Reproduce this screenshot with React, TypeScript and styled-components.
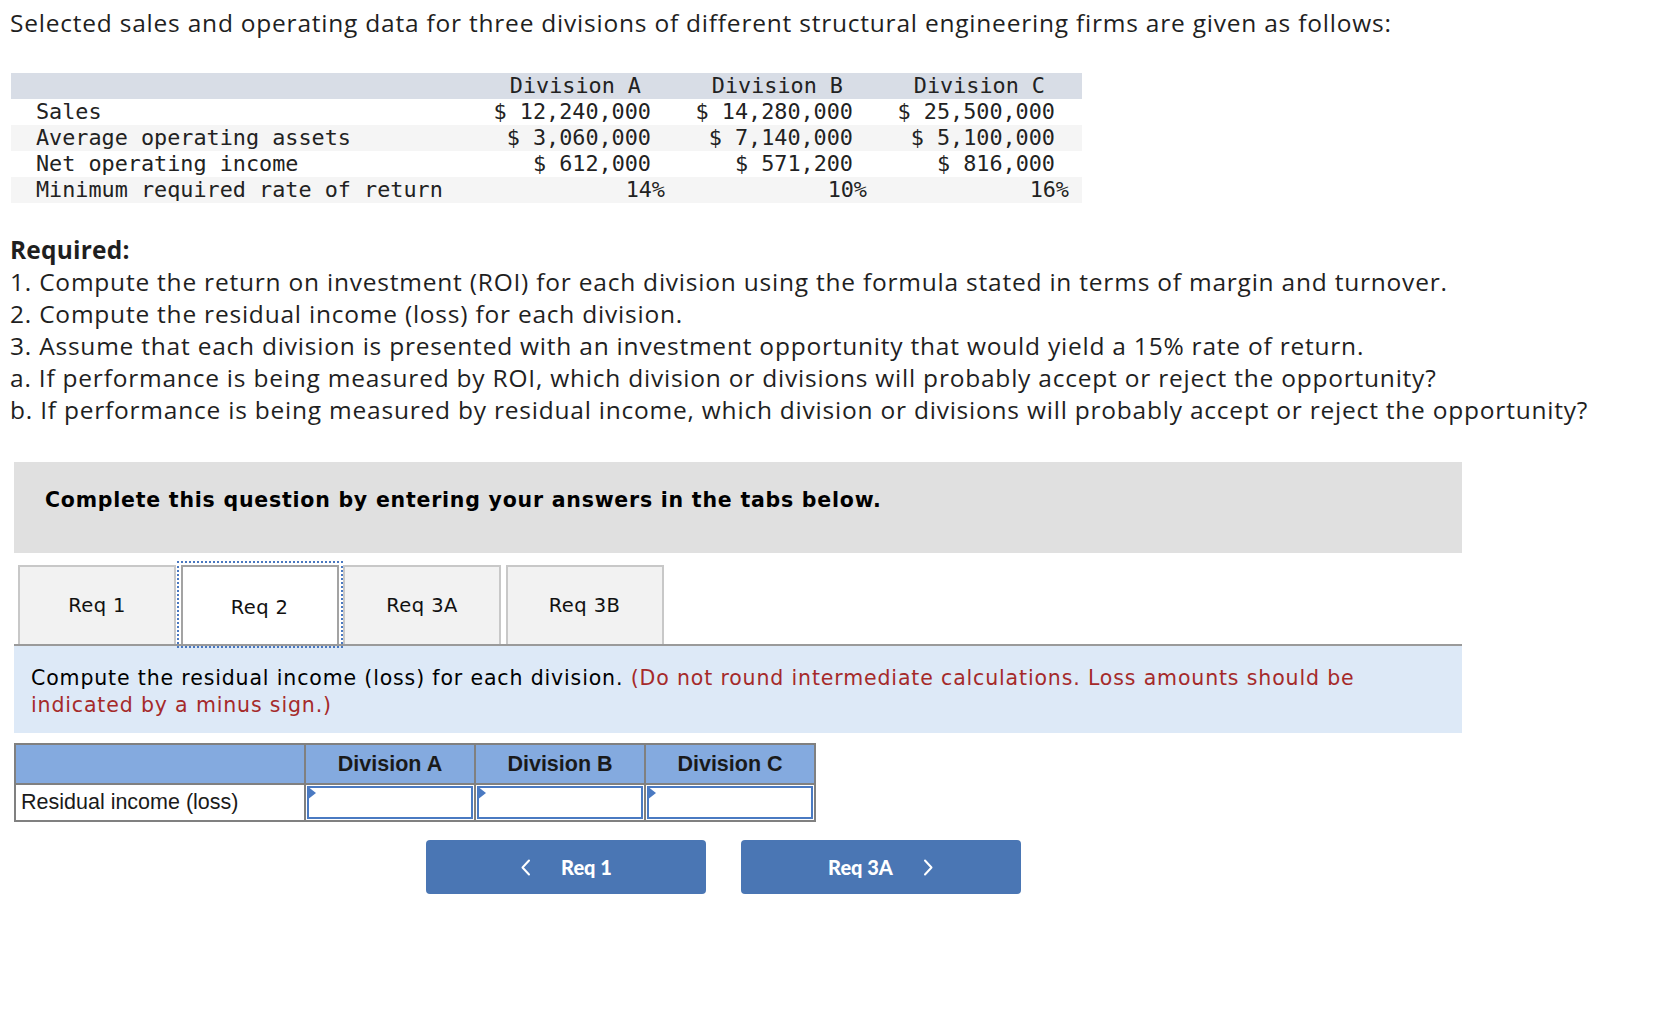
import React from 'react';
import styled, { createGlobalStyle } from 'styled-components';

const GlobalStyle = createGlobalStyle`
  html, body { margin: 0; padding: 0; background: #fff; }
  body { font-family: "Open Sans", "Liberation Sans", sans-serif; color: #1f1f1f; }
`;

const Page = styled.div`
  padding: 7px 0 40px 10px;
`;

const Intro = styled.p`
  margin: 0;
  font-family: "Open Sans", "Liberation Sans", sans-serif;
  font-size: 24.5px;
  letter-spacing: 0.78px;
  line-height: 32px;
  color: #1f1f1f;
`;

const DataTable = styled.div`
  margin: 34px 0 0 1px;
  width: 1071px;
  font-family: "DejaVu Sans Mono", "Liberation Mono", monospace;
  font-size: 21.8px;
  color: #222;
`;

type Tone = 'head' | 'white' | 'gray';

const DataRow = styled.div<{ $tone: Tone }>`
  display: grid;
  grid-template-columns: 1fr 202px 202px 202px;
  padding-right: 13px;
  height: 26px;
  line-height: 26px;
  background: ${(p) => (p.$tone === 'head' ? '#d8dde6' : p.$tone === 'gray' ? '#f5f5f5' : '#ffffff')};
`;

const DataLabel = styled.span`
  padding-left: 25px;
  white-space: pre;
`;

const DataCell = styled.span<{ $pad: number }>`
  text-align: right;
  padding-right: ${(p) => p.$pad}px;
  white-space: pre;
`;

const Required = styled.div`
  margin-top: 31px;
  font-family: "Open Sans", "Liberation Sans", sans-serif;
  font-size: 24.5px;
  letter-spacing: 0.78px;
  line-height: 32px;
  color: #1f1f1f;
`;

const ReqTitle = styled.div`
  font-weight: 700;
  letter-spacing: 0.2px;
`;

const ReqLine = styled.div``;

const Question = styled.div`
  margin: 36px 0 0 4px;
  width: 1448px;
`;

const Banner = styled.div`
  box-sizing: border-box;
  height: 91px;
  padding: 26px 0 0 31px;
  background: #e0e0e0;
  font-family: "DejaVu Sans", Verdana, sans-serif;
  font-weight: 700;
  font-size: 20.5px;
  letter-spacing: 0.77px;
  line-height: 24px;
  color: #000;
`;

const TabBar = styled.div`
  margin-top: 12px;
  display: flex;
  gap: 4.5px;
  padding-left: 4px;
  border-bottom: 2px solid #9a9a9a;
`;

const Tab = styled.div<{ $active?: boolean }>`
  box-sizing: border-box;
  width: 158px;
  height: 79px;
  display: flex;
  align-items: center;
  justify-content: center;
  background: ${(p) => (p.$active ? '#ffffff' : '#f2f2f2')};
  border: 2px solid ${(p) => (p.$active ? '#a3a3a3' : '#c8c8c8')};
  border-bottom: none;
  font-family: "DejaVu Sans", Verdana, sans-serif;
  font-size: 19.5px;
  letter-spacing: 0.4px;
  color: #111;
  ${(p) => (p.$active ? 'outline: 2px dotted #4a78c0; outline-offset: 2px; padding-top: 4px;' : '')}
`;

const Instructions = styled.div`
  box-sizing: border-box;
  height: 87px;
  padding: 19px 20px 0 17px;
  background: #dde9f7;
  font-family: "DejaVu Sans", Verdana, sans-serif;
  font-size: 20.5px;
  letter-spacing: 0.85px;
  line-height: 27px;
  color: #000;
`;

const InstrLine = styled.div`
  white-space: nowrap;
`;

const Hint = styled.span`
  color: #a52a2a;
`;

const AnswerGrid = styled.div`
  margin-top: 10px;
  display: grid;
  grid-template-columns: 288px 168px 168px 168px;
  grid-template-rows: 38px 35px;
  gap: 2px;
  padding: 2px;
  width: max-content;
  background: #808080;
  font-family: "Liberation Sans", Arial, sans-serif;
  font-size: 21.5px;
  color: #1a1a1a;
`;

const HeadCell = styled.div`
  display: flex;
  align-items: center;
  justify-content: center;
  background: #84aadf;
  font-weight: 700;
`;

const RowLabel = styled.div`
  display: flex;
  align-items: center;
  padding-left: 5px;
  background: #fff;
`;

const InputCell = styled.div`
  display: flex;
  padding: 1px;
  background: #fff;
`;

const AnswerInput = styled.div`
  position: relative;
  flex: 1;
  border: 2px solid #4a7ac2;
  background: #fff;
  &::before {
    content: '';
    position: absolute;
    left: -2px;
    top: -2px;
    width: 0;
    height: 0;
    border-top: 7px solid transparent;
    border-bottom: 7px solid transparent;
    border-left: 9px solid #4a7ac2;
  }
`;

const NavRow = styled.div`
  margin-top: 18px;
  display: flex;
  gap: 35px;
  padding-left: 412px;
`;

const NavButton = styled.button`
  width: 280px;
  height: 54px;
  display: flex;
  align-items: center;
  justify-content: center;
  gap: 30px;
  padding: 0;
  border: none;
  border-radius: 4px;
  background: #4a76b4;
  color: #fff;
  font-family: Lato, "Liberation Sans", sans-serif;
  font-weight: 900;
  font-size: 20px;
`;

const Chevron = ({ dir }: { dir: 'left' | 'right' }) => (
  <svg width="11" height="17" viewBox="0 0 11 17" fill="none">
    <path
      d={dir === 'left' ? 'M9 1.5 L2.5 8.5 L9 15.5' : 'M2 1.5 L8.5 8.5 L2 15.5'}
      stroke="#fff"
      strokeWidth="2"
      strokeLinecap="round"
      strokeLinejoin="round"
    />
  </svg>
);

const rows: { label: string; values: string[]; tone: Tone; pct?: boolean }[] = [
  { label: 'Sales', values: ['$ 12,240,000', '$ 14,280,000', '$ 25,500,000'], tone: 'white' },
  { label: 'Average operating assets', values: ['$ 3,060,000', '$ 7,140,000', '$ 5,100,000'], tone: 'gray' },
  { label: 'Net operating income', values: ['$ 612,000', '$ 571,200', '$ 816,000'], tone: 'white' },
  { label: 'Minimum required rate of return', values: ['14%', '10%', '16%'], tone: 'gray', pct: true },
];

export default function App() {
  return (
    <>
      <GlobalStyle />
      <Page>
        <Intro>
          Selected sales and operating data for three divisions of different structural engineering firms are given as follows:
        </Intro>

        <DataTable>
          <DataRow $tone="head">
            <DataLabel />
            <DataCell $pad={24}>Division A</DataCell>
            <DataCell $pad={24}>Division B</DataCell>
            <DataCell $pad={24}>Division C</DataCell>
          </DataRow>
          {rows.map((r) => (
            <DataRow key={r.label} $tone={r.tone}>
              <DataLabel>{r.label}</DataLabel>
              {r.values.map((v, i) => (
                <DataCell key={i} $pad={r.pct ? 0 : 14}>
                  {v}
                </DataCell>
              ))}
            </DataRow>
          ))}
        </DataTable>

        <Required>
          <ReqTitle>Required:</ReqTitle>
          <ReqLine>1. Compute the return on investment (ROI) for each division using the formula stated in terms of margin and turnover.</ReqLine>
          <ReqLine>2. Compute the residual income (loss) for each division.</ReqLine>
          <ReqLine>3. Assume that each division is presented with an investment opportunity that would yield a 15% rate of return.</ReqLine>
          <ReqLine>a. If performance is being measured by ROI, which division or divisions will probably accept or reject the opportunity?</ReqLine>
          <ReqLine>b. If performance is being measured by residual income, which division or divisions will probably accept or reject the opportunity?</ReqLine>
        </Required>

        <Question>
          <Banner>Complete this question by entering your answers in the tabs below.</Banner>

          <TabBar>
            <Tab>Req 1</Tab>
            <Tab $active>Req 2</Tab>
            <Tab>Req 3A</Tab>
            <Tab>Req 3B</Tab>
          </TabBar>

          <Instructions>
            <InstrLine>
              Compute the residual income (loss) for each division.{' '}
              <Hint>(Do not round intermediate calculations. Loss amounts should be</Hint>
            </InstrLine>
            <InstrLine>
              <Hint>indicated by a minus sign.)</Hint>
            </InstrLine>
          </Instructions>

          <AnswerGrid>
            <HeadCell />
            <HeadCell>Division A</HeadCell>
            <HeadCell>Division B</HeadCell>
            <HeadCell>Division C</HeadCell>
            <RowLabel>Residual income (loss)</RowLabel>
            <InputCell>
              <AnswerInput />
            </InputCell>
            <InputCell>
              <AnswerInput />
            </InputCell>
            <InputCell>
              <AnswerInput />
            </InputCell>
          </AnswerGrid>

          <NavRow>
            <NavButton>
              <Chevron dir="left" />
              <span>Req 1</span>
            </NavButton>
            <NavButton>
              <span>Req 3A</span>
              <Chevron dir="right" />
            </NavButton>
          </NavRow>
        </Question>
      </Page>
    </>
  );
}
